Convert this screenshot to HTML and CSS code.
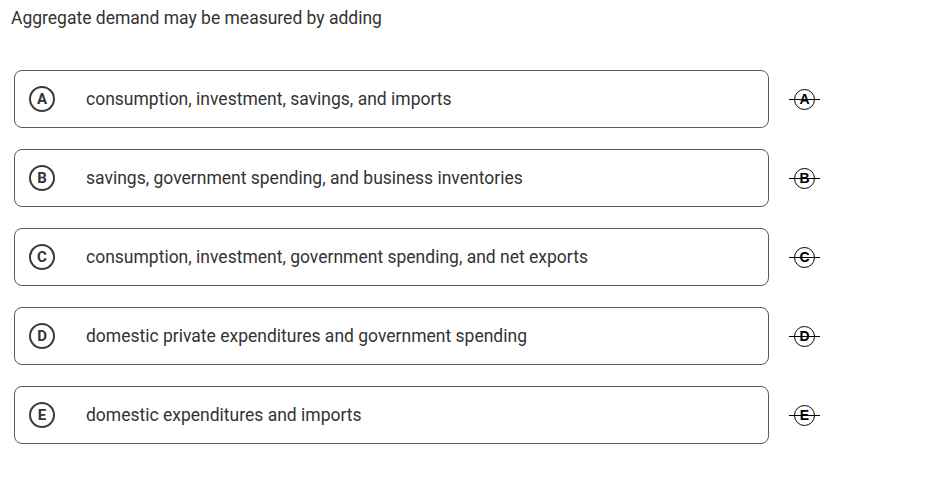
FILE: index.html
```html
<!DOCTYPE html>
<html>
<head>
<meta charset="utf-8">
<link rel="stylesheet" href="styles.css">
</head>
<body>
<div class="q">
  <p class="stem">Aggregate demand may be measured by adding</p>
  <div class="opts">
    <div class="row">
      <div class="opt"><span class="badge">A</span><span class="txt">consumption, investment, savings, and imports</span></div>
      <div class="strike"><span class="sc">A</span></div>
    </div>
    <div class="row">
      <div class="opt"><span class="badge">B</span><span class="txt">savings, government spending, and business inventories</span></div>
      <div class="strike"><span class="sc">B</span></div>
    </div>
    <div class="row">
      <div class="opt"><span class="badge">C</span><span class="txt">consumption, investment, government spending, and net exports</span></div>
      <div class="strike"><span class="sc">C</span></div>
    </div>
    <div class="row">
      <div class="opt"><span class="badge">D</span><span class="txt">domestic private expenditures and government spending</span></div>
      <div class="strike"><span class="sc">D</span></div>
    </div>
    <div class="row">
      <div class="opt"><span class="badge">E</span><span class="txt">domestic expenditures and imports</span></div>
      <div class="strike"><span class="sc">E</span></div>
    </div>
  </div>
</div>
</body>
</html>
```

FILE: styles.css
```css
html, body {
  margin: 0;
  padding: 0;
  background: #ffffff;
}
body {
  font-family: Roboto, "Liberation Sans", Arial, sans-serif;
  color: #333333;
}
.q {
  padding: 6px 0 0 11px;
}
.stem {
  margin: 0;
  font-size: 17.5px;
  line-height: 25px;
  color: #333333;
}
.opts {
  display: flex;
  flex-direction: column;
  gap: 21px;
  margin-top: 39px;
  margin-left: 3px;
}
.row {
  display: flex;
  align-items: center;
}
.opt {
  width: 755px;
  height: 58px;
  box-sizing: border-box;
  border: 1px solid #5a5a5a;
  border-radius: 8px;
  display: flex;
  align-items: center;
  padding-left: 14px;
}
.badge {
  width: 26px;
  height: 26px;
  box-sizing: border-box;
  border: 2px solid #3a3a3a;
  border-radius: 50%;
  display: flex;
  align-items: center;
  justify-content: center;
  font-size: 15px;
  font-weight: 700;
  line-height: 1;
  color: #333333;
  flex: none;
}
.txt {
  margin-left: 31px;
  font-size: 17.5px;
  color: #333333;
}
.strike {
  position: relative;
  margin-left: 20px;
  width: 31px;
  height: 22px;
  display: flex;
  align-items: center;
  justify-content: center;
}
.strike::before {
  content: "";
  position: absolute;
  left: 0;
  right: 0;
  top: 50%;
  height: 1px;
  background: #000000;
}
.sc {
  position: relative;
  width: 21px;
  height: 21px;
  box-sizing: border-box;
  border: 1.5px solid #000000;
  border-radius: 50%;
  display: flex;
  align-items: center;
  justify-content: center;
  font-family: "Liberation Sans", Arial, sans-serif;
  font-size: 14px;
  font-weight: 700;
  line-height: 1;
  color: #000000;
}
```
